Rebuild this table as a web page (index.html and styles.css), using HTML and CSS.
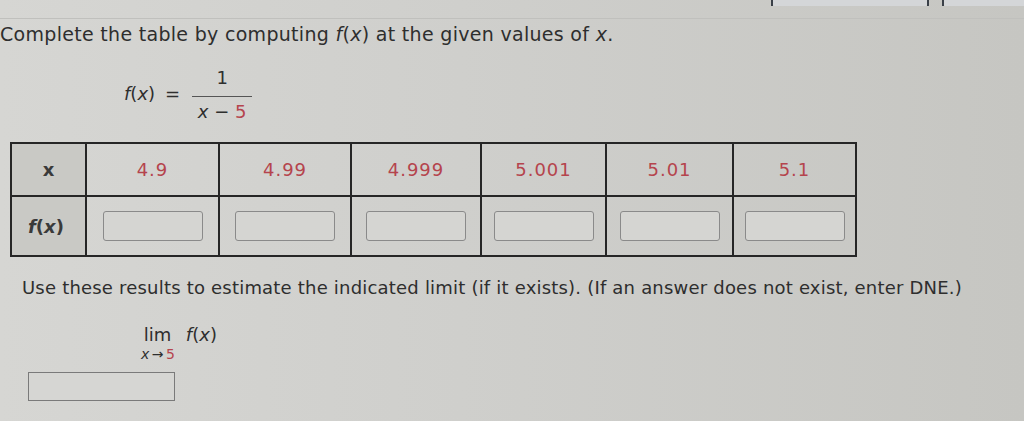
FILE: index.html
```html
<!DOCTYPE html>
<html>
<head>
<meta charset="utf-8">
<link rel="stylesheet" href="styles.css">
</head>
<body>
<div class="topbar">
  <div class="tbtn tbtn-a"></div>
  <div class="tbtn tbtn-b"></div>
</div>
<div class="rule"></div>
<p class="prompt">Complete the table by computing <i>f</i>(<i>x</i>) at the given values of <i>x</i>.</p>

<div class="formula">
  <span class="fx"><i>f</i>(<i>x</i>)</span>
  <span class="eq">=</span>
  <span class="frac">
    <span class="num">1</span>
    <span class="den"><i>x</i> − <span class="red">5</span></span>
  </span>
</div>

<table class="grid">
  <colgroup>
    <col class="c0"><col class="c1"><col class="c2"><col class="c3"><col class="c4"><col class="c5"><col class="c6">
  </colgroup>
  <tr class="row-x">
    <th>x</th>
    <td>4.9</td>
    <td>4.99</td>
    <td>4.999</td>
    <td>5.001</td>
    <td>5.01</td>
    <td>5.1</td>
  </tr>
  <tr class="row-f">
    <th><i>f</i>(<i>x</i>)</th>
    <td><div class="box"></div></td>
    <td><div class="box"></div></td>
    <td><div class="box"></div></td>
    <td><div class="box"></div></td>
    <td><div class="box"></div></td>
    <td><div class="box"></div></td>
  </tr>
</table>

<p class="prompt2">Use these results to estimate the indicated limit (if it exists). (If an answer does not exist, enter DNE.)</p>

<div class="limit">
  <div class="lim-col">
    <span class="lim">lim</span>
    <span class="sub"><i>x</i> → <span class="red">5</span></span>
  </div>
  <span class="lfx"><i>f</i>(<i>x</i>)</span>
</div>

<div class="answer"></div>
</body>
</html>
```
FILE: styles.css
```css
html, body {
  margin: 0;
  padding: 0;
}
body {
  width: 1024px;
  height: 421px;
  overflow: hidden;
  font-family: "DejaVu Sans", Verdana, sans-serif;
  color: #2e2e2e;
  background: linear-gradient(90deg, #d6d6d3 0%, #cfcfcc 45%, #c6c6c2 100%);
}
.topbar {
  display: flex;
  justify-content: flex-end;
  gap: 13px;
  height: 6px;
  overflow: hidden;
}
.tbtn {
  height: 20px;
  margin-top: -14px;
  border: 2px solid #3a4048;
  border-radius: 5px;
  background: #d4d6d8;
}
.tbtn-a { width: 154px; }
.tbtn-b { width: 90px; margin-right: -12px; }
.rule {
  height: 1px;
  margin-top: 12px;
  background: #c0c0bd;
}
.prompt {
  margin: 2px 0 0 0;
  font-size: 19px;
  line-height: 26px;
  letter-spacing: 0.3px;
}
.formula {
  display: flex;
  align-items: center;
  margin: 12px 0 0 124px;
  font-size: 18px;
  height: 68px;
}
.fx { margin-top: 0; }
.eq { margin: 0 10px 0 10px; }
.frac {
  display: flex;
  flex-direction: column;
  align-items: center;
  width: 60px;
  margin: 4px 0 0 2px;
}
.num {
  padding-bottom: 7px;
  border-bottom: 1px solid #555;
  width: 100%;
  text-align: center;
  box-sizing: border-box;
  line-height: 22px;
}
.den { padding-top: 4px; line-height: 22px; }
.red { color: #b5444d; }
.grid {
  margin: 15px 0 0 10px;
  border-collapse: collapse;
  table-layout: fixed;
  width: 845px;
}
.c0 { width: 75px; }
.c1 { width: 133px; }
.c2 { width: 132px; }
.c3 { width: 130px; }
.c4 { width: 125px; }
.c5 { width: 127px; }
.c6 { width: 123px; }
.grid th, .grid td {
  border: 2px solid #262626;
  text-align: center;
  font-weight: normal;
  font-size: 18px;
  padding: 0;
}
.grid th {
  background: #c9c9c5;
  font-weight: bold;
  color: #3a3a3a;
}
.row-x { height: 53px; }
.row-x td { color: #b5444d; letter-spacing: 1px; }
.row-f { height: 60px; }
.row-f th { text-align: left; padding-left: 16px; }
.box {
  width: 98px;
  height: 28px;
  margin: 0 auto;
  border: 1px solid #8a8a8a;
  border-radius: 3px;
  background: #d5d5d2;
}
.prompt2 {
  margin: 20px 0 0 22px;
  font-size: 18px;
  line-height: 22px;
  letter-spacing: 0.2px;
}
.limit {
  display: flex;
  align-items: flex-start;
  margin: 26px 0 0 141px;
  font-size: 18px;
}
.lim-col {
  display: flex;
  flex-direction: column;
  align-items: center;
}
.lim { line-height: 20px; }
.sub { font-size: 14px; line-height: 18px; letter-spacing: -1px; }
.lfx { margin-left: 12px; line-height: 20px; }
.answer {
  width: 145px;
  height: 27px;
  margin: 9px 0 0 28px;
  border: 1px solid #7a7a7a;
  background: #d6d6d3;
}
```
